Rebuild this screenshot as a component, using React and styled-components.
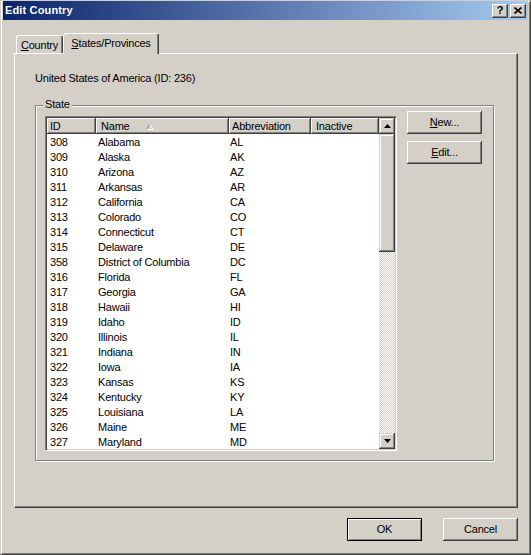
import React from 'react'
import styled, { createGlobalStyle } from 'styled-components'

const FACE = '#d4d0c8'
const SHADOW = '#808080'
const DARK = '#404040'
const LIGHT = '#ffffff'

const raised = `
  box-shadow: inset -1px -1px ${DARK}, inset 1px 1px ${LIGHT},
    inset -2px -2px ${SHADOW}, inset 2px 2px ${FACE};
`

const GlobalStyle = createGlobalStyle`
  html, body {
    margin: 0;
    padding: 0;
    background: ${FACE};
  }
  * {
    box-sizing: border-box;
  }
`

const Window = styled.div`
  width: 531px;
  height: 555px;
  display: flex;
  flex-direction: column;
  padding: 0 2px 2px 2px;
  background: ${FACE};
  border: 1px solid;
  border-color: ${FACE} ${DARK} ${DARK} ${FACE};
  box-shadow: inset 1px 1px ${LIGHT}, inset -1px -1px ${SHADOW};
  font-family: 'Liberation Sans', Arial, sans-serif;
  font-size: 11px;
  letter-spacing: -0.2px;
  color: #000;
`

const TitleBar = styled.div`
  height: 19px;
  display: flex;
  align-items: center;
  padding: 0 2px;
  background: linear-gradient(90deg, #0a246a, #a6caf0);
`

const TitleText = styled.div`
  flex: 1;
  color: #fff;
  font-weight: bold;
  font-size: 11px;
  letter-spacing: 0.15px;
  line-height: 13px;
`

const CaptionButton = styled.div`
  width: 16px;
  height: 14px;
  margin-left: ${({ $gap }) => $gap || 0}px;
  display: flex;
  align-items: center;
  justify-content: center;
  background: ${FACE};
  font-weight: bold;
  font-size: 11px;
  line-height: 11px;
  letter-spacing: 0;
  padding-bottom: 1px;
  ${raised}
`

const Body = styled.div`
  flex: 1;
  display: flex;
  flex-direction: column;
  padding: 13px 10px 11px 11px;
`

const TabStrip = styled.div`
  height: 20px;
  display: flex;
  align-items: flex-end;
  padding-left: 2px;
`

const Tab = styled.div`
  width: ${({ $width }) => $width}px;
  height: ${({ $active }) => ($active ? 21 : 18)}px;
  margin-bottom: ${({ $active }) => ($active ? -1 : 0)}px;
  position: relative;
  z-index: ${({ $active }) => ($active ? 1 : 0)};
  display: flex;
  justify-content: center;
  padding-top: 3px;
  line-height: 13px;
  background: ${FACE};
  border-top: 1px solid ${LIGHT};
  border-left: 1px solid ${LIGHT};
  border-right: 1px solid ${DARK};
  border-radius: 3px 3px 0 0;
  box-shadow: inset -1px 0 ${SHADOW};
`

const Mnemonic = styled.span`
  text-decoration: underline;
`

const Panel = styled.div`
  height: 455px;
  padding: 18px 0 0 20px;
  border: 1px solid;
  border-color: ${LIGHT} ${DARK} ${DARK} ${LIGHT};
  box-shadow: inset -1px -1px ${SHADOW};
`

const InfoLabel = styled.div`
  line-height: 13px;
`

const GroupBox = styled.div`
  position: relative;
  width: 459px;
  margin-top: 20px;
  display: flex;
  align-items: flex-start;
  padding: 5px 11px 9px 9px;
  border: 1px solid ${SHADOW};
  box-shadow: inset 1px 1px ${LIGHT}, 1px 1px ${LIGHT};
`

const Legend = styled.span`
  position: absolute;
  top: -8px;
  left: 7px;
  padding: 0 2px;
  line-height: 13px;
  background: ${FACE};
`

const ListView = styled.div`
  width: 352px;
  height: 335px;
  margin-top: 5px;
  display: flex;
  padding: 1px;
  background: #fff;
  border: 1px solid;
  border-color: ${SHADOW} ${LIGHT} ${LIGHT} ${SHADOW};
  box-shadow: inset 1px 1px ${DARK}, inset -1px -1px ${FACE};
`

const ListMain = styled.div`
  flex: 1;
  display: flex;
  flex-direction: column;
  overflow: hidden;
`

const HeaderRow = styled.div`
  display: flex;
  height: 16px;
`

const HeaderCell = styled.div`
  width: ${({ $width }) => $width}px;
  height: 16px;
  display: flex;
  align-items: center;
  padding-left: ${({ $pad }) => $pad}px;
  background: ${FACE};
  line-height: 13px;
  white-space: nowrap;
  box-shadow: inset -1px -1px ${DARK}, inset 1px 1px ${LIGHT},
    inset -2px -2px ${SHADOW};
`

const SortArrow = styled.svg`
  margin-left: 16px;
  margin-top: 1px;
`

const Row = styled.div`
  display: flex;
  height: 15px;
  padding-top: 1px;
  line-height: 14px;
`

const Cell = styled.div`
  width: ${({ $width }) => $width}px;
  padding-left: ${({ $pad }) => $pad}px;
  white-space: nowrap;
  overflow: hidden;
`

const ScrollBar = styled.div`
  width: 16px;
  display: flex;
  flex-direction: column;
`

const ScrollPart = styled.div`
  height: ${({ $height }) => $height}px;
  flex-shrink: 0;
  display: flex;
  align-items: center;
  justify-content: center;
  background: ${FACE};
  box-shadow: inset -1px -1px ${DARK}, inset 1px 1px ${FACE},
    inset -2px -2px ${SHADOW}, inset 2px 2px ${LIGHT};
`

const Track = styled.div`
  flex: 1;
  background-color: ${FACE};
  background-image: conic-gradient(
    ${LIGHT} 25%,
    ${FACE} 0 50%,
    ${LIGHT} 0 75%,
    ${FACE} 0
  );
  background-size: 2px 2px;
`

const ButtonColumn = styled.div`
  margin-left: 10px;
  display: flex;
  flex-direction: column;
  gap: 7px;
`

const PushButton = styled.div`
  width: 75px;
  height: 23px;
  display: flex;
  align-items: center;
  justify-content: center;
  line-height: 13px;
  background: ${FACE};
  ${({ $default }) =>
    $default
      ? `
        border: 1px solid #000;
        box-shadow: inset 1px 1px ${LIGHT}, inset -1px -1px ${SHADOW};
      `
      : raised}
`

const Footer = styled.div`
  margin-top: 10px;
  display: flex;
  justify-content: flex-end;
  gap: 21px;
`

const columns = [49, 133, 82, 68]

const states = [
  ['308', 'Alabama', 'AL'],
  ['309', 'Alaska', 'AK'],
  ['310', 'Arizona', 'AZ'],
  ['311', 'Arkansas', 'AR'],
  ['312', 'California', 'CA'],
  ['313', 'Colorado', 'CO'],
  ['314', 'Connecticut', 'CT'],
  ['315', 'Delaware', 'DE'],
  ['358', 'District of Columbia', 'DC'],
  ['316', 'Florida', 'FL'],
  ['317', 'Georgia', 'GA'],
  ['318', 'Hawaii', 'HI'],
  ['319', 'Idaho', 'ID'],
  ['320', 'Illinois', 'IL'],
  ['321', 'Indiana', 'IN'],
  ['322', 'Iowa', 'IA'],
  ['323', 'Kansas', 'KS'],
  ['324', 'Kentucky', 'KY'],
  ['325', 'Louisiana', 'LA'],
  ['326', 'Maine', 'ME'],
  ['327', 'Maryland', 'MD'],
]

const Arrow = ({ down }) => (
  <svg width="7" height="4" viewBox="0 0 7 4">
    <path d={down ? 'M0 0h7L3.5 4z' : 'M3.5 0L7 4H0z'} fill="#000" />
  </svg>
)

const App = () => (
  <>
    <GlobalStyle />
    <Window>
      <TitleBar>
        <TitleText>Edit Country</TitleText>
        <CaptionButton>?</CaptionButton>
        <CaptionButton $gap={2}>
          <svg width="8" height="7" viewBox="0 0 8 7">
            <path d="M0.5 0.5L7.5 6.5M7.5 0.5L0.5 6.5" stroke="#000" strokeWidth="1.6" />
          </svg>
        </CaptionButton>
      </TitleBar>
      <Body>
        <TabStrip>
          <Tab $width={47}>
            <span>
              <Mnemonic>C</Mnemonic>ountry
            </span>
          </Tab>
          <Tab $width={96} $active>
            <span>
              <Mnemonic>S</Mnemonic>tates/Provinces
            </span>
          </Tab>
        </TabStrip>
        <Panel>
          <InfoLabel>United States of America (ID: 236)</InfoLabel>
          <GroupBox>
            <Legend>State</Legend>
            <ListView>
              <ListMain>
                <HeaderRow>
                  <HeaderCell $width={columns[0]} $pad={3}>ID</HeaderCell>
                  <HeaderCell $width={columns[1]} $pad={5}>
                    Name
                    <SortArrow width="8" height="6" viewBox="0 0 8 6">
                      <path d="M0.5 5.5L3.5 0.5" stroke={SHADOW} fill="none" />
                      <path d="M4 0.5L7.5 5.5H0.5" stroke={LIGHT} fill="none" />
                    </SortArrow>
                  </HeaderCell>
                  <HeaderCell $width={columns[2]} $pad={3}>Abbreviation</HeaderCell>
                  <HeaderCell $width={columns[3]} $pad={5}>Inactive</HeaderCell>
                </HeaderRow>
                {states.map(([id, name, abbr]) => (
                  <Row key={id}>
                    <Cell $width={columns[0]} $pad={3}>{id}</Cell>
                    <Cell $width={columns[1]} $pad={2}>{name}</Cell>
                    <Cell $width={columns[2]} $pad={1}>{abbr}</Cell>
                    <Cell $width={columns[3]} $pad={2} />
                  </Row>
                ))}
              </ListMain>
              <ScrollBar>
                <ScrollPart $height={16}>
                  <Arrow />
                </ScrollPart>
                <ScrollPart $height={118} />
                <Track />
                <ScrollPart $height={16}>
                  <Arrow down />
                </ScrollPart>
              </ScrollBar>
            </ListView>
            <ButtonColumn>
              <PushButton>
                <span>
                  <Mnemonic>N</Mnemonic>ew...
                </span>
              </PushButton>
              <PushButton>
                <span>
                  <Mnemonic>E</Mnemonic>dit...
                </span>
              </PushButton>
            </ButtonColumn>
          </GroupBox>
        </Panel>
        <Footer>
          <PushButton $default>OK</PushButton>
          <PushButton>Cancel</PushButton>
        </Footer>
      </Body>
    </Window>
  </>
)

export default App
